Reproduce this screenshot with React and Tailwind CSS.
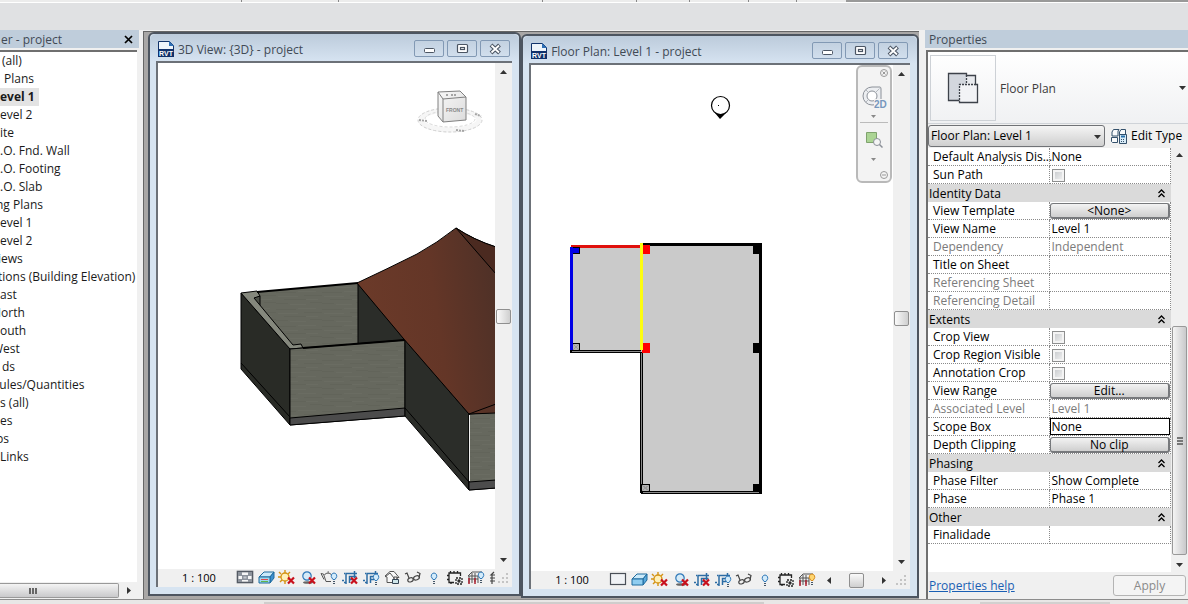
import React, { useState } from 'react';

const tree = [
    { label: '(all)', pad: 'pl-0.5' },
    { label: 'Plans', pad: 'pl-1' },
    { label: 'evel 1', pad: 'pl-0', active: true },
    { label: 'evel 2', pad: 'pl-0' },
    { label: 'ite', pad: 'pl-0' },
    { label: '.O. Fnd. Wall', pad: 'pl-0' },
    { label: '.O. Footing', pad: 'pl-0' },
    { label: '.O. Slab', pad: 'pl-0' },
    { label: 'ng Plans', pad: '-ml-1' },
    { label: 'evel 1', pad: 'pl-0' },
    { label: 'evel 2', pad: 'pl-0' },
    { label: 'iews', pad: '-ml-0.5' },
    { label: 'tions (Building Elevation)', pad: '-ml-0.5' },
    { label: 'ast', pad: 'pl-0' },
    { label: 'North', pad: '-ml-2' },
    { label: 'outh', pad: 'pl-0' },
    { label: 'West', pad: '-ml-2' },
    { label: 'ds', pad: 'pl-0.5' },
    { label: 'dules/Quantities', pad: '-ml-2' },
    { label: 's (all)', pad: 'pl-0' },
    { label: 'es', pad: 'pl-0' },
    { label: 'ps', pad: '-ml-1' },
    { label: 'Links', pad: 'pl-0' },
];

const properties = [
    { name: 'Default Analysis Dis...', type: 'text', value: 'None' },
    { name: 'Sun Path', type: 'check' },
    { group: 'Identity Data' },
    { name: 'View Template', type: 'button', value: '<None>' },
    { name: 'View Name', type: 'text', value: 'Level 1' },
    { name: 'Dependency', type: 'text', value: 'Independent', disabled: true },
    { name: 'Title on Sheet', type: 'text', value: '' },
    { name: 'Referencing Sheet', type: 'text', value: '', disabled: true },
    { name: 'Referencing Detail', type: 'text', value: '', disabled: true },
    { group: 'Extents' },
    { name: 'Crop View', type: 'check' },
    { name: 'Crop Region Visible', type: 'check' },
    { name: 'Annotation Crop', type: 'check' },
    { name: 'View Range', type: 'button', value: 'Edit...' },
    { name: 'Associated Level', type: 'text', value: 'Level 1', disabled: true },
    { name: 'Scope Box', type: 'input', value: 'None' },
    { name: 'Depth Clipping', type: 'button', value: 'No clip' },
    { group: 'Phasing' },
    { name: 'Phase Filter', type: 'text', value: 'Show Complete' },
    { name: 'Phase', type: 'text', value: 'Phase 1' },
    { group: 'Other' },
    { name: 'Finalidade', type: 'text', value: '' },
];

const Arrow = ({ dir }) => {
    const paths = { up: 'M0 5 L3.5 1 L7 5Z', down: 'M0 2 L3.5 6 L7 2Z', left: 'M5 0 L1 3.5 L5 7Z', right: 'M2 0 L6 3.5 L2 7Z' };
    return (
        <svg className="w-[7px] h-[7px]" viewBox="0 0 7 7">
            <path d={paths[dir]} fill="#333" />
        </svg>
    );
};

const RedX = () => <path d="M10 7.500l6 6M16 7.500l-6 6" stroke="#c8101c" strokeWidth="2.200" fill="none" />;

const Bulb = ({ x = 0, y = 0, fill = '#d4ecfb', stroke = '#2f78b8' }) => (
    <g transform={`translate(${x} ${y})`}>
        <path d="M9 2a3 3 0 0 1 2 5l-1 1.5H8L7 7a3 3 0 0 1 2-5z" fill={fill} stroke={stroke} />
        <path d="M8 10.5h2M8 12.5h2" stroke="#456" />
    </g>
);

const CropFrame = () => (
    <g fill="none" stroke="#2c6ca4" strokeWidth="1.500">
        <path d="M1 10.500h2M5 14V3.500h11M8.500 13V6.500h7M8 9.500h4M13.500 1v7" />
        <path d="M3 12.500h2M3 3.500h1" />
    </g>
);

const icons = {
    checker: (
        <g>
            <rect x="1.5" y="1.5" width="15" height="11" fill="#f6f6f6" stroke="#555b64" strokeWidth="1.6" />
            <path d="M2 2h4v4H2zM12 2h4v4h-4zM6 5h6v5H6zM2 9h4v3H2zM12 9h4v3h-4z" fill="#8d939c" />
            <path d="M7.500 6.500h3v2h-3z" fill="#c3c7cd" />
        </g>
    ),
    rect: <rect x="1.5" y="1.5" width="15" height="11" fill="#f0f2f5" stroke="#4a4f57" strokeWidth="1.2" />,
    box: (
        <g stroke="#1e6b9d" strokeLinejoin="round">
            <path d="M2 7L7 2h10l-4 5z" fill="#cbeafa" />
            <path d="M13 7l4-5v6l-4 5z" fill="#5aa9dc" />
            <path d="M2 7h11v6H2z" fill="#8fcdf0" />
        </g>
    ),
    colorBox: (
        <g stroke="#1e6b9d" strokeLinejoin="round">
            <path d="M2 7L7 2h10l-4 5z" fill="#cbeafa" />
            <path d="M13 7l4-5v6l-4 5z" fill="#3d8fd0" />
            <path d="M2 7h11v6H2z" fill="#9fd8ee" />
            <path d="M4 9.5h7" stroke="#e0484a" />
            <path d="M4 11.5h7" stroke="#5fb54a" />
        </g>
    ),
    sun: (
        <g>
            <path d="M7 0v3M1 2l2 2M0 7h3M2 12l2-2M12 2l-2 2M7 11v3" stroke="#d49313" strokeWidth="1.4" />
            <circle cx="7" cy="7" r="4" fill="#fff0b8" stroke="#d49313" strokeWidth="1.3" />
            <RedX />
        </g>
    ),
    shadow: (
        <g>
            <ellipse cx="9" cy="12.500" rx="5" ry="1.3" fill="#666" />
            <circle cx="8" cy="6" r="4.2" fill="#d5ebf8" stroke="#2f78b8" strokeWidth="1.2" />
            <RedX />
        </g>
    ),
    teapot: (
        <g fill="none" stroke="#555">
            <path d="M1 3.500l2.500 0.500 2.500 7.500h5M4.500 5c1-2.500 6-2.500 7 0M1 3.500l3 6M7.500 2h1.500" />
            <Bulb x={5} y={1} />
        </g>
    ),
    crop: (
        <g>
            <CropFrame />
            <RedX />
        </g>
    ),
    cropBulb: (
        <g>
            <CropFrame />
            <Bulb x={5} y={2} />
        </g>
    ),
    house: (
        <g fill="#f8f8f8" stroke="#555">
            <path d="M2 6l5-4.500h4l5 6h-2v5H4V7z" />
            <path d="M2 7l5-4 4 5v5" fill="none" />
            <path d="M9.500 9.500h6v4h-6z" fill="#cfe6ea" stroke="#345" />
            <path d="M11 9V7h3v2" fill="none" />
        </g>
    ),
    glasses: (
        <g fill="none" stroke="#444" strokeWidth="1.2">
            <path d="M1 4l2-1 2 5M13 2l3 1.500-1 4" />
            <ellipse cx="6.500" cy="10" rx="2.800" ry="2" transform="rotate(-20 6 10)" />
            <ellipse cx="12.500" cy="8" rx="3" ry="2" transform="rotate(-20 12 8)" />
        </g>
    ),
    bulb: <Bulb y={1} />,
    film: (
        <g fill="none" stroke="#222" strokeWidth="1.3">
            <path d="M8 12.500H3V3h11.500v3" />
            <path d="M4.500 1v2M8 1v2M11.500 1v2M1 5.500h2M1 9.500h2M5 12v2" />
            <path d="M10 8h6v6h-6z" strokeDasharray="2 1" />
            <circle cx="13" cy="11" r="1" />
        </g>
    ),
    analytic: (
        <g fill="none" stroke="#555">
            <path d="M1 6l4-4h10M1 6h10l4-4M2 6v7M5 3v10M11 6v7M8 3v9M2 9h9" />
            <path d="M2 8v6M8 8v6" stroke="#b02030" strokeWidth="1.5" />
            <Bulb x={5} y={0} />
        </g>
    ),
    analyticWarm: (
        <g fill="none" stroke="#555">
            <path d="M1 6l4-4h10M1 6h10l4-4M2 6v7M5 3v10M11 6v7M8 3v9M2 9h9" />
            <path d="M2 8v6M8 8v6" stroke="#b02030" strokeWidth="1.5" />
            <Bulb x={5} y={0} fill="#ffd671" stroke="#d58a1c" />
        </g>
    ),
    more: <path d="M6 2L3 5h4M4 5v9M2 8h5M2 11h5" fill="none" stroke="#444" strokeWidth="1.2" />,
};

const ViewIcon = ({ name }) => (
    <button type="button" aria-label={name} className="w-[18px] h-4 shrink-0">
        <svg className="w-[18px] h-4" viewBox="0 0 18 16">{icons[name]}</svg>
    </button>
);

const Grip = () => (
    <svg className="w-3 h-3" viewBox="0 0 12 12" fill="#c4c4c4">
        <path d="M8 1h2v2H8zM4 5h2v2H4zM8 5h2v2H8zM0 9h2v2H0zM4 9h2v2H4zM8 9h2v2H8z" />
    </svg>
);

const RvtIcon = () => (
    <svg className="w-4 h-4" viewBox="0 0 16 16">
        <path d="M0.500 0.500h11l4 4V10H.5z" fill="#eef4fa" stroke="#12336a" />
        <path d="M11 0l5 5h-5z" fill="#2f6fb4" />
        <path d="M0 8h16v8H0z" fill="#10306a" />
        <text x="8" y="15" fontSize="7" fontWeight="700" fill="#fff" textAnchor="middle" fontFamily="Liberation Sans, sans-serif">RVT</text>
    </svg>
);

const windowButtons = [
    { name: 'Minimize', icon: <rect x="3.500" y="6.500" width="10" height="4" rx="1" fill="#fff" stroke="#4b5563" /> },
    {
        name: 'Restore',
        icon: (
            <g fill="#fff" stroke="#4b5563" strokeWidth="1.2">
                <rect x="3.500" y="2.500" width="10" height="8" rx="1" />
                <rect x="6.500" y="5.500" width="4" height="2" />
            </g>
        ),
    },
    {
        name: 'Close',
        icon: (
            <g>
                <path d="M4 3l8.500 8M12.500 3L4 11" stroke="#4b5563" strokeWidth="4" />
                <path d="M4.500 3.500l7.500 7M12 3.500l-7.500 7" stroke="#fff" strokeWidth="1.8" />
            </g>
        ),
    },
];

const VerticalScroll = () => (
    <div className="w-[17px] shrink-0 bg-[#f0f0f0] flex flex-col items-center justify-between py-1.5">
        <Arrow dir="up" />
        <div className="w-[15px] h-[15px] border border-[#8f8f8f] rounded-xs bg-linear-to-r from-[#fafafa] to-[#cfcfcf]" />
        <Arrow dir="down" />
    </div>
);

const ViewWindow = ({ title, tools, children, horizontal, className }) => (
    <section className={`flex flex-col min-w-0 border-2 border-[#4d5560] rounded-t-md bg-[#d7e4f1] ${className}`}>
        <header className="h-[27px] shrink-0 flex items-center pt-0.5 pl-2 pr-[9px] rounded-t-md bg-linear-to-b from-[#bccbdb] to-[#d6e3f1]">
            <RvtIcon />
            <h2 className="pt-0.5 pl-1 flex-1 truncate text-[12px] leading-4 text-[#414a55]">{title}</h2>
            <div className="flex gap-[3px]">
                {windowButtons.map((button) => (
                    <button key={button.name} type="button" aria-label={button.name} className="w-[30px] h-[17px] flex items-center justify-center border border-[#8299b4] rounded-xs">
                        <svg className="w-[17px] h-[14px]" viewBox="0 0 17 14">{button.icon}</svg>
                    </button>
                ))}
            </div>
        </header>
        <div className="flex-1 min-h-0 flex flex-col ml-1.5 mr-[7px] mb-[7px] border-t-2 border-l-2 border-[#6c7178] bg-white">
            <div className="flex-1 min-h-0 flex">
                {children}
                <VerticalScroll />
            </div>
            <div className="h-[18px] shrink-0 flex items-center bg-[#f0f0f0]">
                <div className="flex-1 min-w-0 flex items-center overflow-hidden">
                    <span className="w-[78px] shrink-0 pl-6 text-[11px] leading-4 text-black whitespace-nowrap">1 : 100</span>
                    <div className="flex gap-[3px]">
                        {tools.map((tool) => (
                            <ViewIcon key={tool} name={tool} />
                        ))}
                    </div>
                </div>
                {horizontal && (
                    <div className="w-[73px] shrink-0 flex items-center justify-between px-1.5">
                        <Arrow dir="left" />
                        <div className="w-[15px] h-[15px] border border-[#8f8f8f] rounded-xs bg-linear-to-b from-[#fafafa] to-[#cfcfcf]" />
                        <Arrow dir="right" />
                    </div>
                )}
                <div className="w-[17px] shrink-0 flex items-end justify-center">
                    <Grip />
                </div>
            </div>
        </div>
    </section>
);

const HouseModel = () => (
    <div className="flex-1 min-w-0 flex justify-end overflow-hidden">
        <svg className="w-[337px] h-[507px] shrink-0" viewBox="158 63 337 507">
            <defs>
                <linearGradient id="roof" x1="0" x2="1" y1="0.2" y2="0">
                    <stop offset="0" stopColor="#6b3a29" />
                    <stop offset="0.500" stopColor="#643627" />
                    <stop offset="1" stopColor="#4c3027" />
                </linearGradient>
                <linearGradient id="cube" x1="0" x2="1" y1="0" y2="1">
                    <stop offset="0" stopColor="#f8f8f8" />
                    <stop offset="1" stopColor="#dcdcdc" />
                </linearGradient>
                <pattern id="concrete" width="46" height="17" patternUnits="userSpaceOnUse">
                    <rect width="46" height="17" fill="#66685e" />
                    <path d="M0 3.500h20M28 6.500h18M8 10.500h24M0 14.500h12M34 13.500h12" stroke="#62645a" />
                    <path d="M22 2.500h18M2 7.500h20M30 10.500h12M14 15.500h16" stroke="#6a6c62" />
                </pattern>
            </defs>
            <g strokeLinejoin="round">
                <path d="M241 293L358 283V343L292 349Z" fill="url(#concrete)" />
                <path d="M358 284L405 340L358 344Z" fill="#2b2d29" stroke="#000" />
                <path d="M253 297L260 296V310Z" fill="#4b4e46" stroke="#000" />
                <path d="M241 293L290 349V425L241 369Z" fill="#292b26" stroke="#000" />
                <path d="M241 293L257 291L260 296L254 298L293 345L301 344L303 348L290 349Z" fill="#85887d" stroke="#000" />
                <path d="M241 363L290 417" stroke="#000" />
                <path d="M290 349L405 340V416L290 425Z" fill="url(#concrete)" stroke="#000" />
                <path d="M290 418L405 408V416L290 425Z" fill="#4c4c4c" stroke="#000" />
                <path d="M257 292L358 283M303 348L405 340" stroke="#000" strokeWidth="2" />
                <path d="M405 340L469 414V490L405 416Z" fill="#2b2d29" stroke="#000" />
                <path d="M405 408L469 482" stroke="#000" />
                <path d="M469 414L496 412V488L469 490Z" fill="url(#concrete)" stroke="#000" />
                <path d="M469 482L496 480V488L469 490Z" fill="#4c4c4c" stroke="#000" />
                <path d="M469.500 415V481" stroke="#eee" />
                <path d="M357 283Q387 269 417 254Q437 243 456 228Q474 240 496 247V413L469 414L403 338Z" fill="url(#roof)" stroke="#000" />
                <path d="M456 228Q474 240 496 247V274Z" fill="#4b2a20" stroke="#000" />
                <path d="M469 414L496 404" stroke="#000" />
            </g>
            <ellipse cx="450" cy="120" rx="29" ry="10" fill="none" stroke="#f6f6f6" strokeWidth="5" />
            <ellipse cx="450" cy="120" rx="32" ry="12" fill="none" stroke="#d0d0d0" strokeDasharray="3 2" />
            <ellipse cx="450" cy="119" rx="25" ry="8" fill="none" stroke="#dadada" strokeDasharray="3 2" />
            <path d="M438 92L460 91L466 97V120L443 122L438 116Z" fill="url(#cube)" stroke="#808080" />
            <path d="M438 92L443 99L466 97M443 99V122" fill="none" stroke="#808080" />
            <text x="446" y="112" fontSize="5" fontWeight="700" fill="#888" fontFamily="Liberation Sans, sans-serif">FRONT</text>
            <path d="M446 95h3M451 95h5M419 120l8 1M475 114l6 2M456 130l8 1" stroke="#a5a5a5" strokeDasharray="2 1" strokeWidth="2" />
        </svg>
    </div>
);

const FloorPlan = () => (
    <div className="relative flex-1 min-w-0 flex justify-end overflow-hidden">
        <svg className="w-[362px] h-[506px] shrink-0" viewBox="531 66 362 506" shapeRendering="crispEdges">
            <path d="M571 247H641V245H761V494H641V353H571Z" fill="#cacaca" />
            <path d="M643 244h119v251h-3V247H643z" fill="#000" />
            <path d="M570 351h71v3h-71zM640 353h3v141h-3zM641 492h119v3H641z" fill="#000" />
            <path d="M572 352h69v1h-69zM641 354h1v138h-1zM643 493h116v1H643z" fill="#8a8a8a" />
            <path d="M572.500 344.500h7v7h-7zM641.500 485.500h8v7h-8z" fill="#b4b4b4" stroke="#000" />
            <path d="M573 345l6 6M579 345l-6 6M642 486l7 6M649 486l-7 6" stroke="#9a9a9a" />
            <path d="M753 247h7v8h-7zM753 344h7v10h-7zM753 485h7v8h-7z" fill="#000" />
            <path d="M571 246h70v3h-70z" fill="#e0100c" />
            <path d="M572 248h8v7h-8z" fill="#000" />
            <path d="M570 248h3v103h-3zM572 249h7v5h-7z" fill="#0000e6" />
            <path d="M643 246h7v9h-7zM642 344h8v10h-8z" fill="#f00" />
            <path d="M640 244h3v107h-3z" fill="#fdfd10" />
            <g shapeRendering="auto">
                <circle cx="720.500" cy="106.500" r="9" fill="#fff" stroke="#000" strokeWidth="1.2" />
                <path d="M714.500 113.500Q720 117 726.500 113.500L720 120Z" fill="#000" />
                <path d="M718 106h1v1h-1z" fill="#000" />
            </g>
        </svg>
        <nav aria-label="Navigation" className="absolute top-0 right-px w-9 h-[118px] flex flex-col border-2 border-[#b9b9b9] rounded-md bg-[#f3f3f3]">
            <button type="button" aria-label="Close bar" className="self-end mt-0.5 mr-0.5">
                <svg className="block w-2 h-2" viewBox="0 0 8 8" fill="none" stroke="#999">
                    <circle cx="4" cy="4" r="3.500" />
                    <path d="M2.500 2.500l3 3M5.500 2.500l-3 3" />
                </svg>
            </button>
            <button type="button" aria-label="Steering wheel" className="mt-2 ml-1">
                <svg className="block w-[26px] h-[24px]" viewBox="0 0 26 24" fill="none">
                    <path d="M10 2h8q1 0 1 2v10q0 6-9 6a9 9 0 0 1 0-18z" fill="#eceef1" stroke="#8b9098" />
                    <circle cx="10" cy="11" r="5" stroke="#8b9098" fill="#fff" />
                    <path d="M6.500 7.500l-3-3M13.500 7.500l4-4M6.500 14.500l-3 3" stroke="#b5b9bf" />
                    <path d="M12 14h14v10H12z" fill="#f3f3f3" />
                    <text x="12" y="23" fontSize="10" fontWeight="700" fill="#7797bd" fontFamily="Liberation Sans, sans-serif">2D</text>
                </svg>
            </button>
            <svg className="w-[7px] h-[7px] mt-1 ml-3" viewBox="0 0 7 7"><path d="M1 2h5L3.500 5z" fill="#888" /></svg>
            <hr className="mx-0.5 mt-0.5 border-[#bbb]" />
            <button type="button" aria-label="Zoom region" className="mt-2 ml-[7px] w-[18px]">
                <svg className="block w-[18px] h-[17px]" viewBox="0 0 18 17" fill="none">
                    <path d="M1.500 1.500h10v10h-10z" fill="#abd494" stroke="#7fa26d" />
                    <circle cx="12" cy="11" r="3.500" fill="#f5f5f5" stroke="#8b9098" />
                    <path d="M14.500 13.500l3 3" stroke="#8b9098" strokeWidth="1.500" />
                </svg>
            </button>
            <svg className="w-[7px] h-[7px] mt-2 ml-3" viewBox="0 0 7 7"><path d="M1 2h5L3.500 5z" fill="#888" /></svg>
            <button type="button" aria-label="Options" className="self-end mt-auto mb-0.5 mr-0.5">
                <svg className="block w-2 h-2" viewBox="0 0 8 8" fill="none" stroke="#999">
                    <circle cx="4" cy="4" r="3.500" />
                    <path d="M2 4h4" />
                </svg>
            </button>
        </nav>
    </div>
);

const Browser = () => (
    <aside className="w-[139px] shrink-0 flex flex-col">
        <header className="h-[18px] mb-0.5 flex items-center justify-between pl-px pr-1 bg-[#bfcddb]">
            <h2 className="text-[12px] leading-[19px] text-[#414a55]">er - project</h2>
            <button type="button" aria-label="Close" className="p-0.5">
                <svg className="w-[9px] h-[9px]" viewBox="0 0 9 9"><path d="M1 1l7 7M8 1L1 8" stroke="#000" strokeWidth="1.700" /></svg>
            </button>
        </header>
        <div className="flex-1 min-h-0 mr-0.5 flex flex-col border-t-2 border-[#6f6f6f] bg-white">
            <ul className="flex-1 overflow-hidden text-[12px] leading-[18px] text-[#1a1a1a] whitespace-nowrap">
                {tree.map((item, index) => (
                    <li key={index} className={item.pad}>
                        <span className={item.active ? 'inline-block pr-1 bg-[#e3e3e3] font-bold' : 'inline-block'}>{item.label}</span>
                    </li>
                ))}
            </ul>
            <div className="h-[17px] shrink-0 flex items-center bg-[#f0f0f0]">
                <div className="flex-1 h-[15px] flex items-center justify-center gap-px border border-l-0 border-[#999] rounded-r-xs bg-linear-to-b from-[#f4f4f4] to-[#c9c9cb]">
                    <span className="ml-[-52px] w-0.5 h-1.5 bg-[#666]" />
                    <span className="w-0.5 h-1.5 bg-[#666]" />
                    <span className="w-0.5 h-1.5 bg-[#666]" />
                </div>
                <div className="w-[18px] flex justify-center"><Arrow dir="right" /></div>
            </div>
        </div>
    </aside>
);

const PropertyValue = ({ row }) => {
    const [value, setValue] = useState(row.value || '');
    if (row.type === 'check') {
        return (
            <input
                type="checkbox"
                aria-label={row.name}
                className="block ml-0.5 mt-[3px] w-[13px] h-[13px] appearance-none border border-[#8e8f8f] bg-linear-to-br from-[#c3c6c9] to-[#f6f6f6] shadow-[inset_0_0_0_2px_#f4f4f4]"
            />
        );
    }
    if (row.type === 'button') {
        return (
            <button type="button" className="block w-full h-4 mt-px border border-r-2 border-b-2 border-[#77797c] rounded-[3px] bg-linear-to-b from-[#f3f3f3] to-[#cfcfcf] text-center leading-[14px]">
                {row.value}
            </button>
        );
    }
    if (row.type === 'input') {
        return (
            <input
                aria-label={row.name}
                value={value}
                onChange={(e) => setValue(e.target.value)}
                className="block w-full h-[17px] pl-px border border-black bg-white leading-[15px] outline-none"
            />
        );
    }
    return <span className="block pl-0.5 whitespace-nowrap">{row.value}</span>;
};

const Properties = () => (
    <aside className="w-[263px] shrink-0 flex flex-col">
        <header className="h-[18px] mb-0.5 shrink-0 pl-1 bg-[#bfcddb]">
            <h2 className="text-[12px] leading-5 text-[#414a55]">Properties</h2>
        </header>
        <div className="flex-1 min-h-0 ml-px flex flex-col border-t-2 border-l-2 border-[#6f6f6f] bg-[#f0f0f0] text-[12px] text-black">
            <button type="button" className="h-[72px] shrink-0 flex items-center px-0.5 border-b border-[#cfd3d8] bg-linear-to-b from-white to-[#f0f1f3] text-left">
                <span className="w-[66px] h-[66px] flex items-center justify-center border border-[#cdd1d6]">
                    <svg className="w-8 h-8" viewBox="0 0 32 32" stroke="#3d424a" strokeWidth="1.300">
                        <path d="M1.500 1.500h18v27h-18z" fill="#d3d7de" stroke="none" />
                        <path d="M19.500 3.500h9v24h-9z" fill="#e8eaee" stroke="none" />
                        <path d="M12.500 12.500h18v18h-18z" fill="#f2f3f6" stroke="none" />
                        <path d="M12 28.500H1.500v-27h18v2h9v9h2v18h-18v-2" fill="none" />
                        <path d="M19.500 3v9M12.500 28V12.500h16" fill="none" strokeDasharray="2 1" />
                    </svg>
                </span>
                <span className="flex-1 pt-0.5 pl-1 text-[#3c3c3c]">Floor Plan</span>
                <Arrow dir="down" />
            </button>
            <div className="h-6 shrink-0 flex items-center">
                <div className="relative w-[177px]">
                    <select aria-label="Instance" className="block w-full h-[22px] pl-0.5 appearance-none border border-[#707276] rounded-[3px] bg-linear-to-b from-[#f5f5f5] to-[#cfcfcf] outline-none">
                        <option>Floor Plan: Level 1</option>
                    </select>
                    <span className="absolute right-1 top-0 h-full flex items-center pointer-events-none"><Arrow dir="down" /></span>
                </div>
                <button type="button" className="ml-1.5 flex items-center gap-1 whitespace-nowrap">
                    <svg className="w-4 h-4" viewBox="0 0 16 16" fill="#f8fafc" stroke="#33506b">
                        <path d="M2.500 1.500L1 4v4h6V3l1-1.500z" />
                        <path d="M10 1.500L8.500 4v4h6V1.500z" />
                        <path d="M.5 9.500h6v5h-5l-1-1z" />
                        <path d="M8.500 6.500h7v9h-7z" fill="#d9ecf8" />
                        <path d="M10 8.500h4" stroke="#2a72ad" strokeWidth="2" />
                        <path d="M10 11.500h4M10 13.500h4" strokeDasharray="1 1" />
                    </svg>
                    Edit Type
                </button>
            </div>
            <div className="flex-1 min-h-0 flex bg-white">
                <div className="flex-1 min-w-0">
                    <table className="w-full table-fixed border-separate border-spacing-0 leading-[17px]">
                        <colgroup>
                            <col className="w-1/2" />
                            <col className="w-1/2" />
                        </colgroup>
                        <tbody>
                            {properties.map((row, index) =>
                                row.group ? (
                                    <tr key={index} className="h-[18px] bg-[#dadada]">
                                        <th colSpan={2} scope="colgroup" className="p-0 font-normal">
                                            <div className="flex items-center justify-between h-[18px] pl-px pr-1.5">
                                                {row.group}
                                                <button type="button" aria-label={`Collapse ${row.group}`}>
                                                    <svg className="w-[7px] h-[9px]" viewBox="0 0 7 9" fill="none" stroke="#000" strokeWidth="1.300">
                                                        <path d="M.5 4l3-3 3 3M.5 8l3-3 3 3" />
                                                    </svg>
                                                </button>
                                            </div>
                                        </th>
                                    </tr>
                                ) : (
                                    <tr key={index} className={row.disabled ? 'h-[18px] text-[#7b7b7b]' : 'h-[18px]'}>
                                        <th scope="row" className="h-[18px] p-0 pl-[5px] text-left align-top font-normal whitespace-nowrap border-b border-r border-dotted border-[#8a8a8a]">{row.name}</th>
                                        <td className="h-[18px] p-0 align-top border-b border-r border-dotted border-[#8a8a8a]">
                                            <PropertyValue row={row} />
                                        </td>
                                    </tr>
                                )
                            )}
                        </tbody>
                    </table>
                </div>
                <div className="w-[17px] shrink-0 flex flex-col items-center bg-[#f0f0f0] py-1">
                    <Arrow dir="up" />
                    <div className="flex-1" />
                    <div className="w-[15px] h-[55%] flex flex-col items-center justify-center gap-px border border-[#999] rounded-xs bg-linear-to-r from-[#f4f4f4] to-[#c9c9cb]">
                        <span className="w-1.5 h-0.5 bg-[#777]" />
                        <span className="w-1.5 h-0.5 bg-[#777]" />
                        <span className="w-1.5 h-0.5 bg-[#777]" />
                    </div>
                    <div className="h-1.5" />
                    <Arrow dir="down" />
                </div>
            </div>
            <footer className="h-[27px] shrink-0 flex items-center justify-between pl-px pr-0.5">
                <a href="#help" className="text-[#1a5fb4] underline">Properties help</a>
                <button type="button" disabled className="w-[73px] h-[21px] border border-[#b4b4b4] rounded-[3px] bg-[#f4f4f4] text-[#8a8a8a]">Apply</button>
            </footer>
        </div>
    </aside>
);

const App = () => {
    return (
        <div className="h-screen min-h-[600px] flex flex-col overflow-hidden bg-[#f0f0f0] font-['Open_Sans',sans-serif]">
            <div className="h-[30px] shrink-0 bg-[#e0e1e3]">
                <div className="h-[3px] flex border-b border-white bg-[#ececec]">
                    <span className="w-[242px] border-r border-[#888]" />
                    <span className="w-[97px] border-r border-[#888]" />
                    <span className="w-[204px] border-r border-[#888]" />
                    <span className="w-[94px] border-r border-[#888]" />
                    <span className="w-[53px] border-r border-[#888]" />
                    <span className="w-[59px] border-r border-[#888]" />
                    <span className="w-[48px] border-r border-[#888]" />
                    <span className="w-[49px]" />
                    <span className="flex-1 bg-[#999]" />
                </div>
            </div>
            <div className="flex-1 min-h-0 flex">
                <Browser />
                <main className="flex-1 min-w-0 ml-1 mr-1.5 mt-px flex border-t border-l border-[#666] bg-[#a9a7a6] pl-1">
                    <ViewWindow
                        title="3D View: {3D} - project"
                        className="flex-[373] mb-[3px]"
                        tools={['checker', 'colorBox', 'sun', 'shadow', 'teapot', 'crop', 'cropBulb', 'house', 'glasses', 'bulb', 'film', 'analytic', 'more']}
                    >
                        <HouseModel />
                    </ViewWindow>
                    <ViewWindow
                        title="Floor Plan: Level 1 - project"
                        className="flex-[398] mt-0.5 mb-px"
                        horizontal
                        tools={['rect', 'box', 'sun', 'shadow', 'crop', 'cropBulb', 'glasses', 'bulb', 'film', 'analyticWarm']}
                    >
                        <FloorPlan />
                    </ViewWindow>
                </main>
                <Properties />
            </div>
            <footer className="h-[5px] shrink-0 flex border-t border-[#8c8c8c] bg-[#e8e7e6]">
                <span className="w-[264px]" />
                <span className="w-[500px] mt-0.5 bg-[#cfcdcc]" />
                <span className="flex-1" />
                <span className="w-[130px] mr-[78px] mt-0.5 bg-[#d2d0cf]" />
            </footer>
        </div>
    );
};

export default App;
